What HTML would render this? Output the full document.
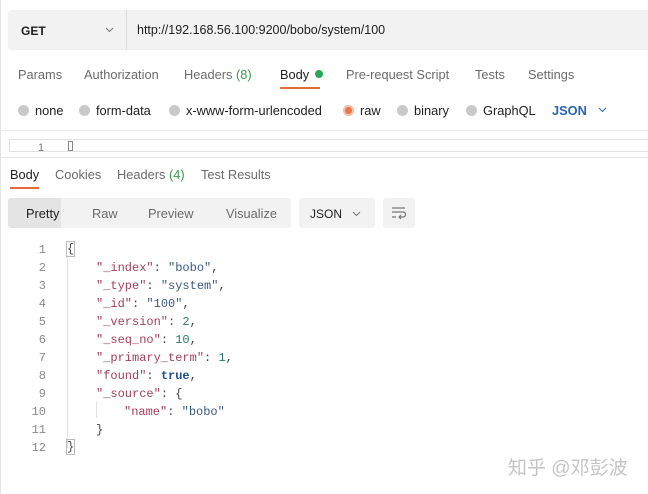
<!DOCTYPE html>
<html><head><meta charset="utf-8"><style>
*{margin:0;padding:0;box-sizing:border-box}
body{width:648px;height:494px;background:#fff;font-family:"Liberation Sans",sans-serif;font-size:12.8px;color:#212121;position:relative;overflow:hidden}
.a{position:absolute;white-space:nowrap}
.g{color:#6b6b6b}
.mono{font-family:"Liberation Mono",monospace;font-size:12px;color:#444}
.ln{position:absolute;left:0;width:46px;text-align:right;color:#8a8a8a;font-family:"Liberation Mono",monospace;font-size:12px}
.k{color:#a1405a}.s{color:#3b5a80}.n{color:#2a7a6a}.t{color:#1f4f8f;font-weight:bold}
.rd{display:inline-block;width:11px;height:11px;border-radius:50%;background:#c9c9c9;vertical-align:-1px;margin-right:6px}
</style></head><body>
<div class="a" style="left:0;top:0;width:1px;height:494px;background:#e4e4e4"></div>
<div class="a" style="left:8px;top:10px;width:640px;height:40px;background:#f2f2f2;border-radius:3px 0 0 3px"></div>
<div class="a" style="left:126px;top:10px;width:1px;height:40px;background:#dcdcdc"></div>
<div class="a" style="left:21px;top:24px;font-weight:bold;font-size:12px">GET</div>
<svg class="a" style="left:105px;top:27px" width="9" height="6" viewBox="0 0 9 6" fill="none" stroke="#777" stroke-width="1"><path d="M1 1l3.5 3.5L8 1"/></svg>
<div class="a" style="left:137px;top:23px;font-size:12.5px">http://192.168.56.100:9200/bobo/system/100</div>
<div class="a g" style="left:18px;top:67px">Params</div>
<div class="a g" style="left:84px;top:67px">Authorization</div>
<div class="a g" style="left:184px;top:67px">Headers <span style="color:#3a9a4a">(8)</span></div>
<div class="a" style="left:280px;top:67px">Body <span style="display:inline-block;width:8px;height:8px;border-radius:50%;background:#25a85a;vertical-align:1px;margin-left:2px"></span></div>
<div class="a" style="left:280px;top:87px;width:40px;height:2px;background:#e26b3e"></div>
<div class="a g" style="left:346px;top:67px">Pre-request Script</div>
<div class="a g" style="left:475px;top:67px">Tests</div>
<div class="a g" style="left:528px;top:67px">Settings</div>
<div class="a" style="left:18px;top:103px"><span class="rd"></span>none</div>
<div class="a" style="left:79px;top:103px"><span class="rd"></span>form-data</div>
<div class="a" style="left:169px;top:103px"><span class="rd"></span>x-www-form-urlencoded</div>
<div class="a" style="left:343px;top:103px"><span class="rd" style="background:#e8764a;box-shadow:inset 0 0 0 2px #f3c2ae"></span>raw</div>
<div class="a" style="left:397px;top:103px"><span class="rd"></span>binary</div>
<div class="a" style="left:466px;top:103px"><span class="rd"></span>GraphQL</div>
<div class="a" style="left:552px;top:103px;color:#2b64b0;font-weight:bold">JSON</div>
<svg class="a" style="left:598px;top:107px" width="9" height="6" viewBox="0 0 9 6" fill="none" stroke="#2b64b0" stroke-width="1"><path d="M1 1l3.5 3.5L8 1"/></svg>
<div class="a" style="left:0;top:130px;width:648px;height:1px;background:#ebebeb"></div>
<div class="a" style="left:9px;top:139px;width:639px;height:13px;border:1px solid #e2e2e2;border-right:none"></div>
<div class="a" style="left:38px;top:142px;font-size:11px;color:#777">1</div>
<div class="a" style="left:68px;top:141px;width:5px;height:10px;border:1px solid #888"></div>
<div class="a" style="left:0;top:157px;width:648px;height:1px;background:#e6e6e6"></div>
<div class="a" style="left:10px;top:167px">Body</div>
<div class="a" style="left:10px;top:187px;width:29px;height:2px;background:#e26b3e"></div>
<div class="a g" style="left:55px;top:167px">Cookies</div>
<div class="a g" style="left:117px;top:167px">Headers <span style="color:#3a9a4a">(4)</span></div>
<div class="a g" style="left:201px;top:167px">Test Results</div>
<div class="a" style="left:8px;top:198px;width:283px;height:30px;background:#f2f2f2;border-radius:3px"></div>
<div class="a" style="left:8px;top:198px;width:53px;height:30px;background:#e4e4e4;border-radius:3px 0 0 3px"></div>
<div class="a" style="left:26px;top:206px">Pretty</div>
<div class="a g" style="left:92px;top:206px">Raw</div>
<div class="a g" style="left:148px;top:206px">Preview</div>
<div class="a g" style="left:226px;top:206px">Visualize</div>
<div class="a" style="left:299px;top:198px;width:76px;height:30px;background:#f2f2f2;border-radius:3px"></div>
<div class="a" style="left:310px;top:207px;font-size:12px">JSON</div>
<svg class="a" style="left:352px;top:211px" width="9" height="6" viewBox="0 0 9 6" fill="none" stroke="#777" stroke-width="1"><path d="M1 1l3.5 3.5L8 1"/></svg>
<div class="a" style="left:383px;top:198px;width:32px;height:30px;background:#f2f2f2;border-radius:3px"></div>
<svg class="a" style="left:391px;top:206px" width="16" height="14" viewBox="0 0 16 14" fill="none" stroke="#777" stroke-width="1.2"><path d="M1 2h13M1 6h11a2.5 2.5 0 0 1 0 5H8M10 9l-2 2 2 2M1 11h4"/></svg>
<div class="a" style="left:67px;top:256px;width:1px;height:192px;background:#e0e0e0"></div>
<div class="a" style="left:96px;top:402px;width:1px;height:16px;background:#e0e0e0"></div>
<div class="a mono" style="left:0;top:241px;line-height:18px;width:648px">
<div style="position:relative;height:18px"><span class="ln">1</span><span style="position:absolute;left:66px;border:1px solid #bbb;line-height:14px">{</span></div>
<div style="position:relative;height:18px"><span class="ln">2</span><span style="position:absolute;left:96px"><span class="k">"_index"</span>: <span class="s">"bobo"</span>,</span></div>
<div style="position:relative;height:18px"><span class="ln">3</span><span style="position:absolute;left:96px"><span class="k">"_type"</span>: <span class="s">"system"</span>,</span></div>
<div style="position:relative;height:18px"><span class="ln">4</span><span style="position:absolute;left:96px"><span class="k">"_id"</span>: <span class="s">"100"</span>,</span></div>
<div style="position:relative;height:18px"><span class="ln">5</span><span style="position:absolute;left:96px"><span class="k">"_version"</span>: <span class="n">2</span>,</span></div>
<div style="position:relative;height:18px"><span class="ln">6</span><span style="position:absolute;left:96px"><span class="k">"_seq_no"</span>: <span class="n">10</span>,</span></div>
<div style="position:relative;height:18px"><span class="ln">7</span><span style="position:absolute;left:96px"><span class="k">"_primary_term"</span>: <span class="n">1</span>,</span></div>
<div style="position:relative;height:18px"><span class="ln">8</span><span style="position:absolute;left:96px"><span class="k">"found"</span>: <span class="t">true</span>,</span></div>
<div style="position:relative;height:18px"><span class="ln">9</span><span style="position:absolute;left:96px"><span class="k">"_source"</span>: {</span></div>
<div style="position:relative;height:18px"><span class="ln">10</span><span style="position:absolute;left:124px"><span class="k">"name"</span>: <span class="s">"bobo"</span></span></div>
<div style="position:relative;height:18px"><span class="ln">11</span><span style="position:absolute;left:96px">}</span></div>
<div style="position:relative;height:18px"><span class="ln">12</span><span style="position:absolute;left:66px;border:1px solid #bbb;line-height:14px">}</span></div>
</div>
<div class="a" style="left:508px;top:453px;font-size:19px;color:#c4c4c4;font-family:'Liberation Sans','Noto Sans CJK SC',sans-serif">知乎 @邓彭波</div>
</body></html>
